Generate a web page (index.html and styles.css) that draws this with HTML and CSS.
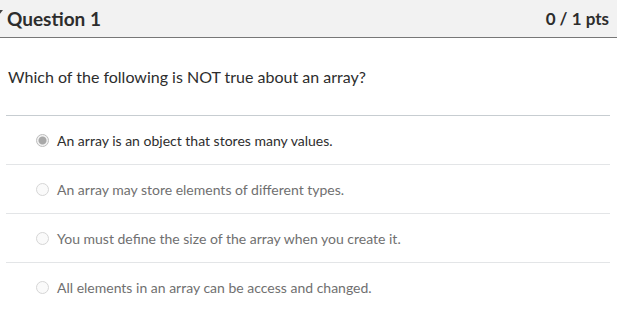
FILE: index.html
```html
<!DOCTYPE html>
<html>
<head>
<meta charset="utf-8">
<link rel="stylesheet" href="styles.css">
</head>
<body>
<div class="question">
  <div class="header">
    <span class="caret"></span>
    <span class="title">Question 1</span>
    <span class="pts">0 / 1 pts</span>
  </div>
  <div class="body">
    <p class="text">Which of the following is NOT true about an array?</p>
    <div class="answers">
      <div class="answer selected"><span class="radio"></span><span class="label">An array is an object that stores many values.</span></div>
      <div class="answer"><span class="radio"></span><span class="label">An array may store elements of different types.</span></div>
      <div class="answer"><span class="radio"></span><span class="label">You must define the size of the array when you create it.</span></div>
      <div class="answer"><span class="radio"></span><span class="label">All elements in an array can be access and changed.</span></div>
    </div>
  </div>
</div>
</body>
</html>
```
FILE: styles.css
```css
html, body { margin: 0; padding: 0; background: #fff; }
body { font-family: Lato, "Liberation Sans", sans-serif; color: #2d3b45; }
.question { width: 617px; }
.header {
  position: relative;
  height: 37px;
  background: #f2f2f2;
  border-bottom: 1px solid #777;
  display: flex;
  align-items: center;
  justify-content: space-between;
  padding: 0 8px 0 7px;
  color: #2d2d2d;
}
.caret {
  position: absolute;
  left: -5px; top: 10px;
  width: 0; height: 0;
  border-left: 4px solid transparent;
  border-right: 4px solid transparent;
  border-top: 5px solid #444;
}
.title { font-weight: 700; font-size: 19px; }
.pts { font-weight: 700; font-size: 17px; }
.body { padding: 0 7px 0 6px; }
.text { margin: 0; padding: 29px 2px 28px; font-size: 16px; color: #2d2d2d; line-height: 20px; }
.answers { border-top: 1px solid #c7cdd1; }
.answer {
  display: flex;
  align-items: center;
  height: 48px;
  border-bottom: 1px solid #e3e5e7;
  padding-left: 30px;
  font-size: 14px;
  color: #707070;
}
.answer:last-child { border-bottom: none; }
.radio {
  width: 11px; height: 11px;
  border-radius: 50%;
  border: 1px solid #d6d6d6;
  background: #fafafa;
  margin-right: 8px;
  box-sizing: content-box;
  flex: none;
}
.answer.selected { color: #2d2d2d; }
.answer.selected .radio {
  border-color: #bdbdbd;
  background: radial-gradient(circle, #a8a8a8 0 3.5px, #f2f2f2 4.5px);
}
```
